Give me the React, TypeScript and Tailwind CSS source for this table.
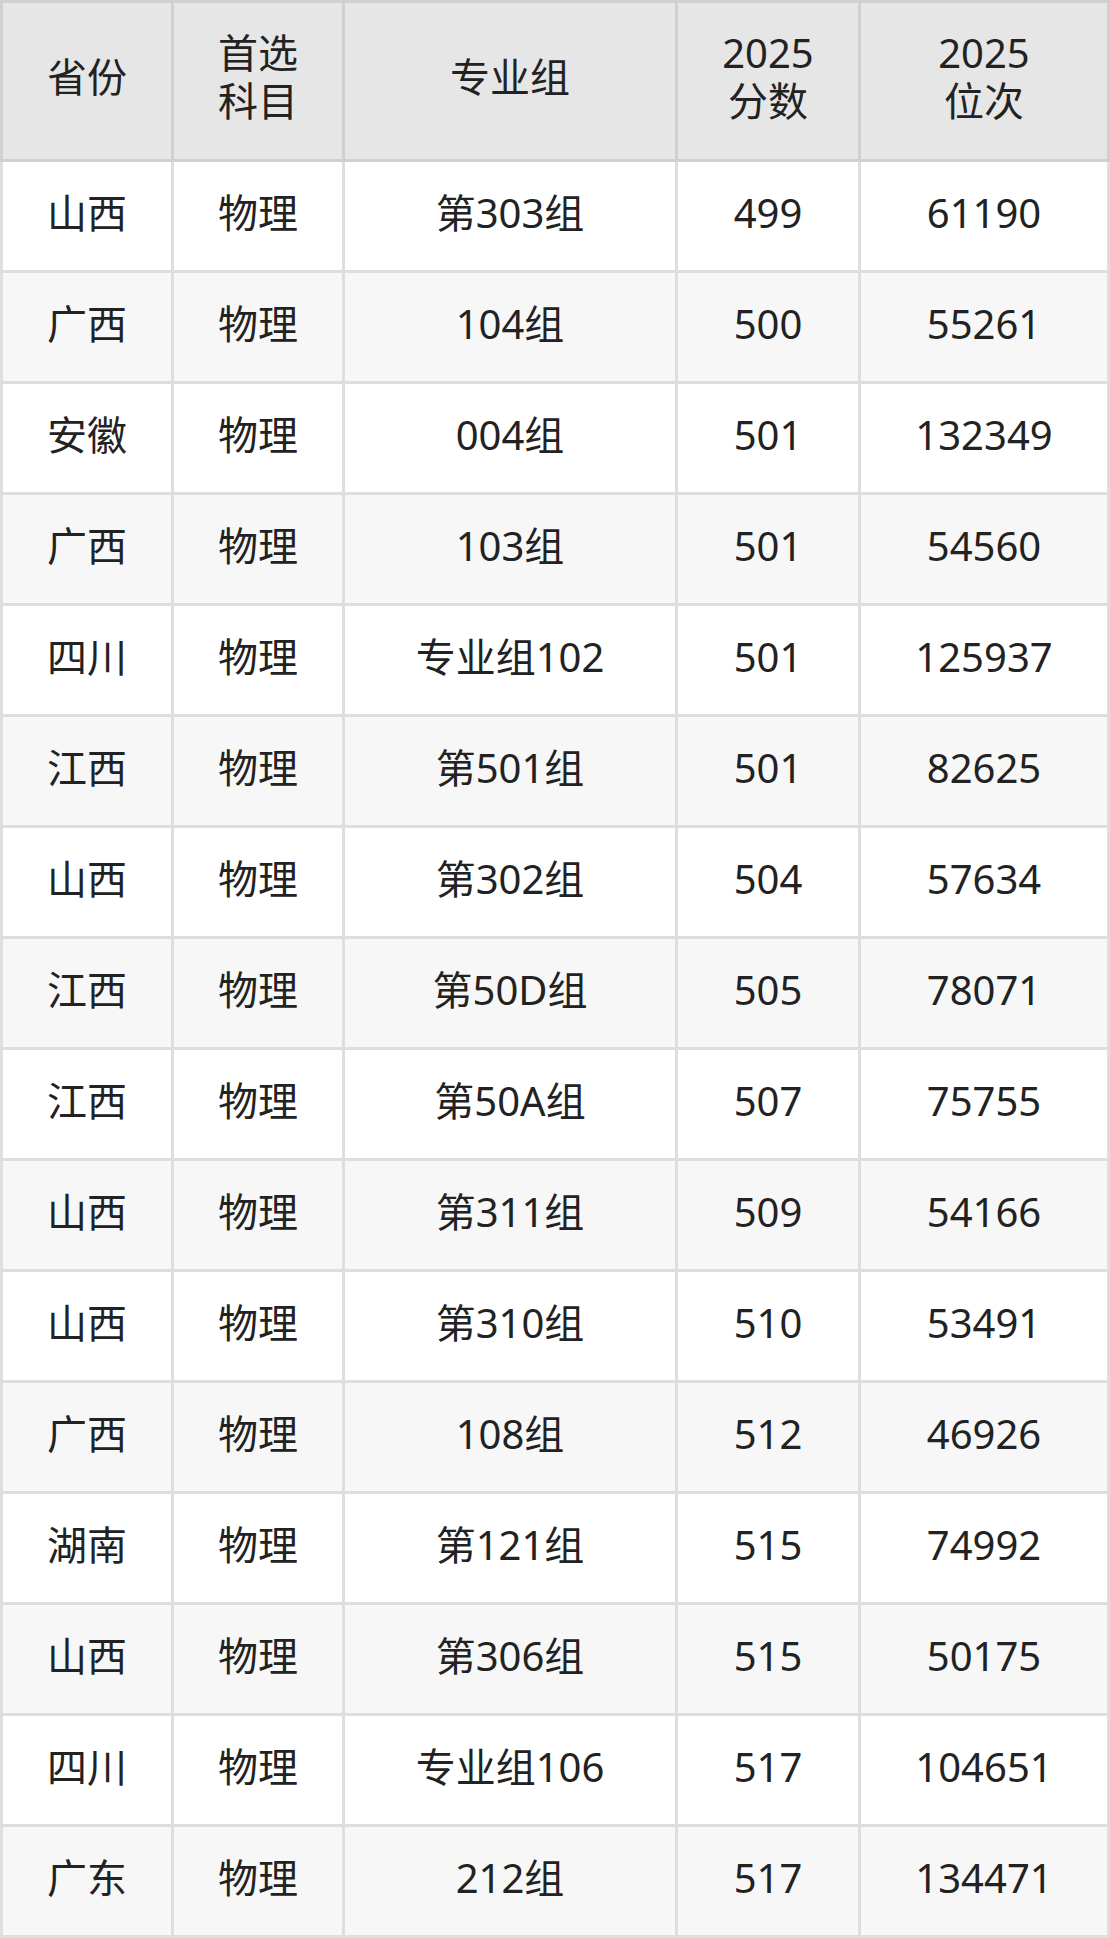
import React from "react";

const rows = [
  ["山西", "物理", "第303组", "499", "61190"],
  ["广西", "物理", "104组", "500", "55261"],
  ["安徽", "物理", "004组", "501", "132349"],
  ["广西", "物理", "103组", "501", "54560"],
  ["四川", "物理", "专业组102", "501", "125937"],
  ["江西", "物理", "第501组", "501", "82625"],
  ["山西", "物理", "第302组", "504", "57634"],
  ["江西", "物理", "第50D组", "505", "78071"],
  ["江西", "物理", "第50A组", "507", "75755"],
  ["山西", "物理", "第311组", "509", "54166"],
  ["山西", "物理", "第310组", "510", "53491"],
  ["广西", "物理", "108组", "512", "46926"],
  ["湖南", "物理", "第121组", "515", "74992"],
  ["山西", "物理", "第306组", "515", "50175"],
  ["四川", "物理", "专业组106", "517", "104651"],
  ["广东", "物理", "212组", "517", "134471"],
];

const headers = [["省份"], ["首选", "科目"], ["专业组"], ["2025", "分数"], ["2025", "位次"]];

const cols = "grid grid-cols-[168px_168px_330px_180px_246px] gap-[3px]";

export default function App() {
  return (
    <div
      className="w-[1110px] text-[#222222] text-[40px] leading-[48px]"
      style={{ fontFamily: '"Noto Sans", "Noto Sans CJK SC", sans-serif' }}
    >
      <div className={`${cols} bg-[#d0d0d0] p-[3px]`}>
        {headers.map((h, i) => (
          <div key={i} className="h-[156px] pb-[8px] bg-[#e6e6e6] flex items-center justify-center text-center">
            <div>
              {h[0]}
              {h[1] && <br />}
              {h[1]}
            </div>
          </div>
        ))}
      </div>
      <div className="bg-[#dedede] px-[3px] pb-[3px] flex flex-col gap-[3px]">
        {rows.map((r, i) => (
          <div key={i} className={cols}>
            {r.map((c, j) => (
              <div
                key={j}
                className={`h-[108px] pb-[7px] flex items-center justify-center ${i % 2 === 1 ? "bg-[#f7f7f7]" : "bg-white"}`}
              >
                {c}
              </div>
            ))}
          </div>
        ))}
      </div>
    </div>
  );
}
